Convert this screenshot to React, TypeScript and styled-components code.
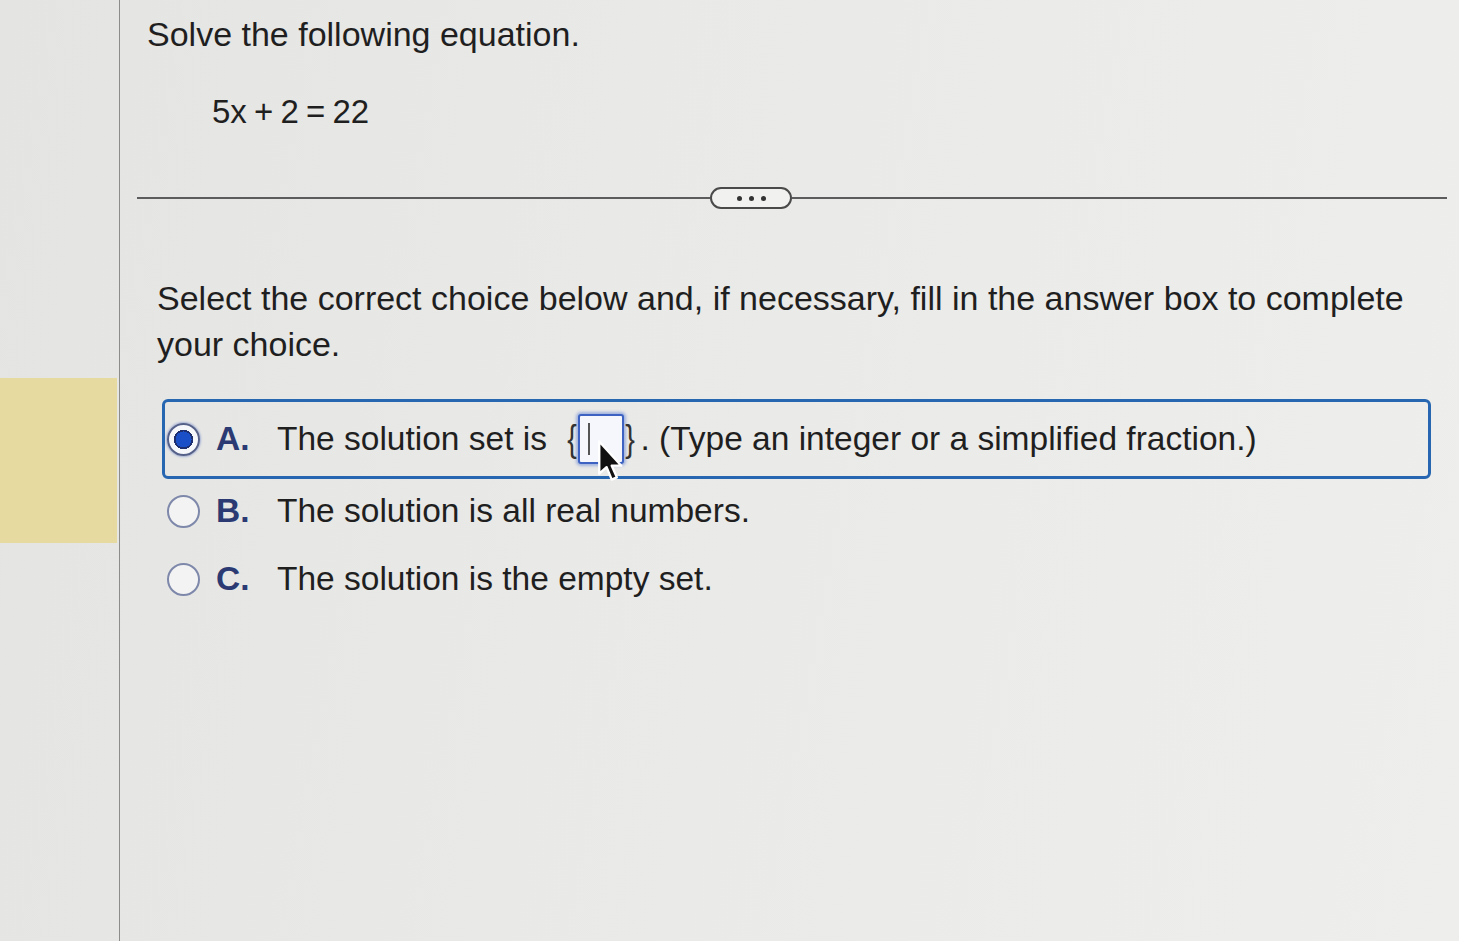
import React from 'react';
import styled, { createGlobalStyle } from 'styled-components';

const Global = createGlobalStyle`
  html, body {
    margin: 0;
    padding: 0;
    height: 941px;
    overflow: hidden;
    background: #e7e7e5;
    font-family: "Liberation Sans", Arial, Helvetica, sans-serif;
    color: #1f1f1f;
  }
`;

const Page = styled.div`
  display: flex;
  width: 1459px;
  height: 941px;
  background: linear-gradient(100deg, #e4e4e2 0%, #e9e9e7 40%, #eeeeec 100%);
`;

const Sidebar = styled.aside`
  width: 120px;
  flex-shrink: 0;
  border-right: 1.5px solid #8c8c8a;
  padding-top: 378px;
  box-sizing: border-box;
`;

const Highlight = styled.div`
  height: 165px;
  margin-right: 2px;
  background: #e7daa0;
`;

const Main = styled.main`
  flex: 1;
  padding: 14px 12px 0 17px;
  display: flex;
  flex-direction: column;
`;

const Title = styled.h1`
  margin: 0;
  padding-left: 10px;
  font-size: 34px;
  line-height: 40px;
  font-weight: normal;
`;

const Equation = styled.div`
  margin-top: 38px;
  padding-left: 75px;
  font-size: 33px;
  line-height: 40px;
  word-spacing: -2px;
`;

const Separator = styled.div`
  margin-top: 55px;
  display: flex;
  align-items: center;
  height: 22px;
  &::before,
  &::after {
    content: '';
    height: 1.5px;
    background: #5c5c5c;
  }
  &::before {
    flex: 573;
  }
  &::after {
    flex: 654;
  }
`;

const MoreButton = styled.button`
  width: 82px;
  height: 22px;
  border: 2px solid #4a4a4a;
  border-radius: 11px;
  background: #f1f1ef;
  display: flex;
  align-items: center;
  justify-content: center;
  gap: 7px;
  padding: 0;
  span {
    width: 5px;
    height: 5px;
    border-radius: 50%;
    background: #333;
  }
`;

const Prompt = styled.p`
  margin: 66px 0 0;
  padding-left: 20px;
  font-size: 34px;
  line-height: 46px;
  max-width: 1270px;
`;

const Options = styled.div`
  margin-top: 32px;
  margin-left: 25px;
  margin-right: 16px;
  display: flex;
  flex-direction: column;
`;

const Option = styled.label<{ $selected?: boolean }>`
  display: flex;
  align-items: center;
  padding: ${p => (p.$selected ? '12px 2px' : '9px 2px 13px')};
  border: 3px solid ${p => (p.$selected ? '#2766b0' : 'transparent')};
  border-radius: 6px;
  font-size: 33.5px;
  line-height: 40px;
  cursor: pointer;
`;

const Radio = styled.span<{ $checked?: boolean }>`
  width: 33px;
  height: 33px;
  box-sizing: border-box;
  flex-shrink: 0;
  border-radius: 50%;
  border: 2.5px solid ${p => (p.$checked ? '#56618a' : '#7e88aa')};
  background: ${p =>
    p.$checked
      ? 'radial-gradient(circle, #1b4fc7 0 8px, #1d2f6e 8px 9.5px, #f6f7fb 9.5px)'
      : '#f3f3f3'};
  box-shadow: ${p => (p.$checked ? '0 0 2px 1px rgba(40, 80, 190, 0.35)' : 'none')};
`;

const Letter = styled.span`
  margin-left: 16px;
  width: 61px;
  flex-shrink: 0;
  font-weight: bold;
  color: #2b3a72;
`;

const Text = styled.span`
  display: flex;
  align-items: center;
  white-space: pre;
`;

const Brace = styled.span`
  font-size: 36px;
  font-weight: 300;
  color: #333;
  transform: scaleX(0.8);
`;

const AnswerWrap = styled.span`
  position: relative;
  display: inline-flex;
  align-items: center;
  margin-left: 10px;
  margin-right: 4px;
`;

const AnswerBox = styled.span`
  width: 46px;
  height: 50px;
  box-sizing: border-box;
  border: 2px solid #3d62c2;
  border-radius: 3px;
  background: #f5f7fc;
  box-shadow: 0 0 3px 2px rgba(70, 110, 210, 0.45);
  display: flex;
  align-items: center;
  padding-left: 8px;
  &::after {
    content: '';
    width: 1.5px;
    height: 32px;
    background: #555;
  }
`;

const Pointer = styled.svg`
  position: absolute;
  left: 30px;
  top: 26px;
  width: 30px;
  height: 44px;
`;

export default function App() {
  return (
    <>
      <Global />
      <Page>
        <Sidebar>
          <Highlight />
        </Sidebar>
        <Main>
          <Title>Solve the following equation.</Title>
          <Equation>5x + 2 = 22</Equation>
          <Separator>
            <MoreButton aria-label="more">
              <span />
              <span />
              <span />
            </MoreButton>
          </Separator>
          <Prompt>
            Select the correct choice below and, if necessary, fill in the answer box to complete your choice.
          </Prompt>
          <Options>
            <Option $selected>
              <Radio $checked />
              <Letter>A.</Letter>
              <Text>
                The solution set is{' '}
                <AnswerWrap>
                  <Brace>{'{'}</Brace>
                  <AnswerBox />
                  <Brace>{'}'}</Brace>
                  <Pointer viewBox="0 0 20 30">
                    <path
                      d="M2 1 L2 23 L7 18.5 L10.5 27 L14 25.5 L10.5 17.5 L17 17.5 Z"
                      fill="#111"
                      stroke="#fff"
                      strokeWidth="1.6"
                      strokeLinejoin="round"
                    />
                  </Pointer>
                </AnswerWrap>
                . (Type an integer or a simplified fraction.)
              </Text>
            </Option>
            <Option>
              <Radio />
              <Letter>B.</Letter>
              <Text>The solution is all real numbers.</Text>
            </Option>
            <Option>
              <Radio />
              <Letter>C.</Letter>
              <Text>The solution is the empty set.</Text>
            </Option>
          </Options>
        </Main>
      </Page>
    </>
  );
}
